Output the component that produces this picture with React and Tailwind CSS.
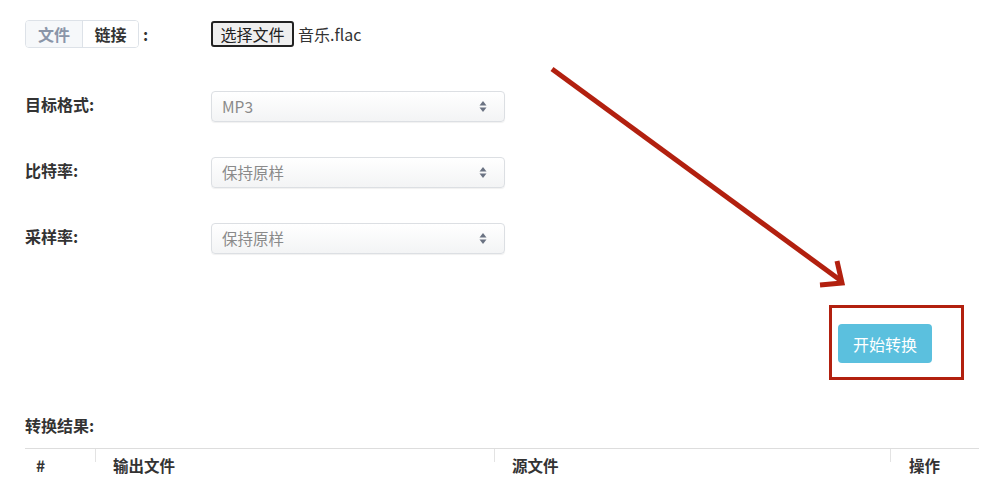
import React from 'react';

const font = { fontFamily: '"Noto Sans CJK SC", "Noto Sans", sans-serif' };

const Caret = () => (
    <svg width="8" height="13" viewBox="0 0 8 13" className="text-gray-500">
        <path d="M4 1 L7.5 5.5 L0.5 5.5 Z" fill="currentColor" />
        <path d="M4 12 L7.5 7.5 L0.5 7.5 Z" fill="currentColor" />
    </svg>
);

const Select = ({ value }) => (
    <div className="w-[294px] h-[31px] flex items-center justify-between pl-[10px] pr-[17px] rounded-[4px] border border-[#dcdfe3] bg-gradient-to-b from-white to-[#f3f4f5] shadow-[0_1px_1px_rgba(0,0,0,0.06)]">
        <span className="text-[15.5px] text-[#8a8a8a]">{value}</span>
        <Caret />
    </div>
);

const Row = ({ label, children }) => (
    <div className="flex items-center">
        <div className="w-[186px] text-[16px] leading-[22px] font-bold text-[#333] -mt-[5px]">{label}</div>
        {children}
    </div>
);

const App = () => {
    return (
        <div className="relative w-[985px] h-[487px] bg-white overflow-hidden" style={font}>
            <div className="px-[25px] pt-[20px]">
                <div className="flex items-center h-[28px]">
                    <div className="w-[186px] flex items-center">
                        <div className="flex h-[28px] border border-[#dde2e8] rounded-[4px] overflow-hidden text-[16px] font-bold">
                            <span className="w-[57px] flex items-center justify-center bg-[#f6f8fa] text-[#8a95a8] border-r border-[#dde2e8]">文件</span>
                            <span className="w-[55px] flex items-center justify-center bg-white text-[#333]">链接</span>
                        </div>
                        <span className="ml-[4px] text-[16px] font-bold text-[#333]">:</span>
                    </div>
                    <div className="flex items-center">
                        <button className="h-[26px] w-[83px] border-2 border-[#222] rounded-[3px] bg-[#efefef] text-[16px] text-[#222] leading-none">选择文件</button>
                        <span className="ml-[4px] text-[16px] text-[#333]">音乐.flac</span>
                    </div>
                </div>

                <div className="mt-[43px] flex flex-col gap-[35px]">
                    <Row label="目标格式:"><Select value="MP3" /></Row>
                    <Row label="比特率:"><Select value="保持原样" /></Row>
                    <Row label="采样率:"><Select value="保持原样" /></Row>
                </div>

                <div className="mt-[70px] flex justify-end pr-[28px]">
                    <button className="w-[94px] h-[39px] rounded-[4px] bg-[#5bc0de] text-white text-[16px]">开始转换</button>
                </div>

                <div className="mt-[51px] text-[16px] leading-[22px] font-bold text-[#333]">转换结果:</div>

                <div className="mt-[12px] w-[954px] border-t border-[#dddddd] flex text-[15.5px] leading-[22px] font-bold text-[#333]">
                    <div className="w-[70px] pl-[11px] pt-[5px]">#</div>
                    <div className="relative w-[399px] pl-[18px] pt-[5px]">
                        <span className="absolute left-0 top-0 h-[13px] w-px bg-[#e3e3e3]" />
                        输出文件
                    </div>
                    <div className="relative w-[396px] pl-[18px] pt-[5px]">
                        <span className="absolute left-0 top-0 h-[13px] w-px bg-[#e3e3e3]" />
                        源文件
                    </div>
                    <div className="relative flex-1 pl-[19px] pt-[5px]">
                        <span className="absolute left-0 top-0 h-[13px] w-px bg-[#e3e3e3]" />
                        操作
                    </div>
                </div>
            </div>

            {/* annotation overlay */}
            <div className="absolute left-[829px] top-[305px] w-[135px] h-[75px] border-[3px] border-[#b2200f] pointer-events-none" />
            <svg className="absolute inset-0 pointer-events-none" width="985" height="487">
                <line x1="552" y1="69" x2="840" y2="280" stroke="#b2200f" strokeWidth="5" />
                <polyline points="837,261 842,283 820,285" fill="none" stroke="#b2200f" strokeWidth="5" />
            </svg>
        </div>
    );
};

export default App;
